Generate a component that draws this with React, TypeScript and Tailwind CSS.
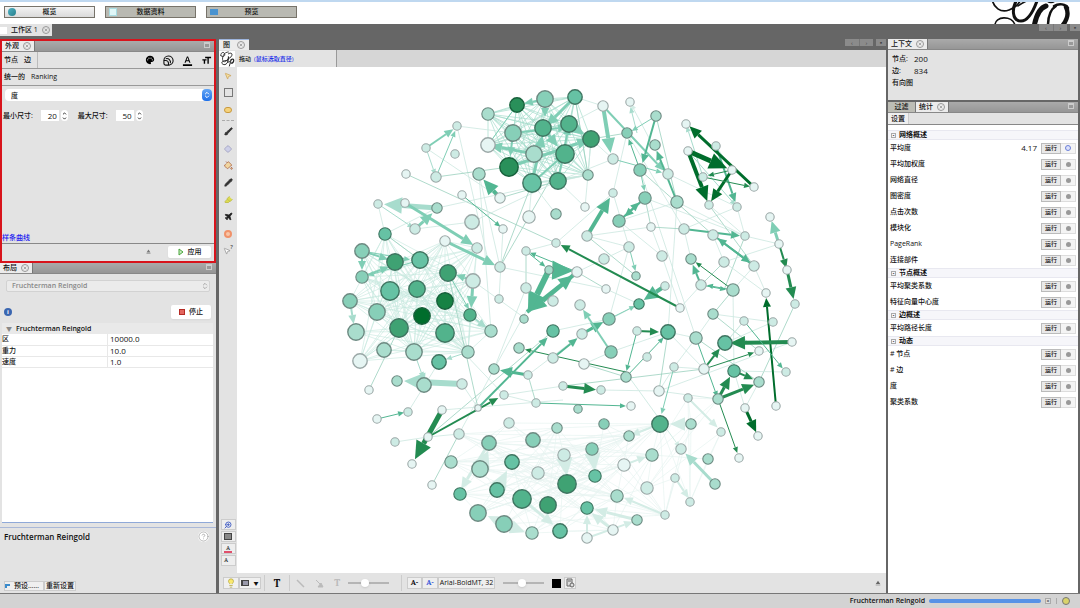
import type { ReactNode } from "react";
import { ChevronDown, ChevronUp, ChevronsUpDown, CircleHelp, Lightbulb, Pencil, Plane, Brush, Diamond, PaintBucket, MousePointer2, Highlighter, ZoomIn } from "lucide-react";
import { MdPalette, MdFormatColorText, MdFormatSize, MdEject } from "react-icons/md";

const shades = ["#e6f5f3", "#cdebe4", "#a9ddcd", "#87cfb8", "#66c2a4", "#52b38c", "#3fa273", "#29905a", "#178244", "#006d2c"];

// x, y, radius, shade
const nodes = [
  [517, 105, 7, 7], [545, 99, 8, 3], [575, 97, 7, 4], [488, 114, 6, 2], [513, 133, 8, 3], [543, 128, 8, 5], [569, 124, 8, 5],
  [488, 145, 7, 0], [534, 154, 8, 2], [565, 154, 9, 5], [509, 167, 9, 7], [532, 183, 9, 4], [558, 181, 8, 5], [591, 139, 8, 6],
  [457, 126, 4, 1], [426, 148, 4, 1], [455, 154, 4, 1], [436, 177, 5, 1], [479, 174, 6, 2], [406, 174, 4, 0], [462, 195, 4, 0],
  [500, 198, 5, 0], [529, 217, 6, 0], [556, 214, 5, 2], [378, 204, 4, 1], [405, 203, 4, 0], [437, 208, 5, 2], [415, 229, 5, 1],
  [472, 222, 7, 1], [503, 229, 4, 0], [445, 241, 5, 0], [477, 248, 5, 1], [385, 234, 6, 4], [362, 251, 7, 3], [395, 262, 8, 6],
  [420, 260, 8, 4], [362, 277, 6, 3], [448, 273, 8, 6], [473, 281, 7, 1], [500, 267, 5, 1], [499, 299, 4, 1], [526, 251, 4, 1],
  [556, 243, 4, 1], [549, 270, 4, 2], [526, 288, 5, 1], [553, 301, 5, 1], [390, 291, 9, 4], [417, 289, 8, 5], [445, 301, 8, 8],
  [350, 301, 7, 3], [377, 312, 8, 3], [422, 316, 8, 9], [470, 315, 6, 5], [356, 332, 8, 2], [399, 328, 9, 6], [445, 333, 9, 5],
  [491, 331, 6, 2], [384, 350, 7, 2], [414, 352, 8, 2], [360, 361, 7, 0], [468, 352, 6, 2], [439, 362, 7, 4], [397, 381, 5, 2],
  [424, 385, 7, 2], [462, 384, 5, 1], [369, 390, 4, 0], [377, 419, 4, 0], [408, 412, 4, 1], [442, 410, 4, 0], [478, 408, 3, 0],
  [428, 437, 4, 0], [459, 434, 5, 1], [395, 442, 4, 1], [412, 464, 4, 0], [432, 485, 4, 0], [451, 462, 6, 2], [460, 494, 6, 4],
  [480, 469, 8, 2], [489, 443, 7, 3], [512, 462, 7, 4], [497, 490, 7, 4], [478, 513, 8, 3], [504, 524, 8, 3], [532, 533, 6, 2],
  [560, 531, 7, 4], [522, 499, 9, 5], [548, 505, 8, 6], [567, 484, 9, 6], [538, 473, 6, 1], [564, 455, 6, 1], [533, 440, 7, 3],
  [557, 428, 5, 2], [509, 423, 5, 1], [536, 403, 4, 1], [504, 395, 4, 1], [494, 369, 5, 2], [528, 375, 4, 1], [553, 358, 5, 1],
  [519, 348, 5, 2], [553, 331, 6, 4], [524, 319, 4, 2], [563, 386, 4, 1], [578, 409, 4, 2], [603, 106, 5, 0], [630, 102, 4, 0],
  [656, 116, 5, 2], [627, 133, 5, 3], [655, 145, 5, 2], [613, 159, 5, 1], [640, 170, 6, 3], [668, 174, 5, 1], [588, 175, 5, 2],
  [613, 193, 4, 1], [645, 198, 6, 3], [677, 202, 6, 2], [619, 221, 6, 3], [651, 227, 4, 0], [585, 207, 4, 0], [587, 236, 5, 1],
  [629, 247, 5, 1], [662, 256, 5, 1], [604, 259, 5, 1], [636, 276, 4, 2], [577, 272, 5, 0], [606, 289, 4, 0], [665, 286, 4, 1],
  [639, 304, 5, 4], [580, 305, 5, 1], [680, 308, 4, 0], [609, 319, 6, 3], [686, 124, 4, 0], [688, 151, 4, 0], [716, 146, 4, 1],
  [732, 170, 4, 0], [703, 177, 4, 1], [754, 187, 4, 0], [709, 205, 4, 1], [737, 207, 4, 1], [684, 229, 5, 1], [713, 235, 5, 1],
  [745, 236, 4, 1], [770, 217, 4, 0], [779, 244, 4, 0], [787, 270, 4, 0], [795, 304, 4, 1], [691, 259, 5, 2], [724, 262, 5, 1],
  [754, 266, 5, 1], [701, 285, 5, 1], [733, 290, 6, 2], [766, 293, 4, 0], [713, 314, 5, 2], [582, 334, 5, 1], [611, 352, 6, 3],
  [637, 331, 4, 1], [668, 332, 7, 4], [647, 357, 4, 1], [584, 364, 5, 0], [626, 377, 5, 2], [696, 338, 6, 2], [725, 343, 7, 4],
  [744, 321, 4, 1], [773, 322, 4, 1], [792, 342, 4, 0], [759, 351, 4, 0], [674, 367, 4, 1], [704, 369, 5, 0], [734, 371, 6, 4],
  [759, 382, 5, 2], [786, 372, 4, 1], [659, 391, 5, 0], [601, 390, 4, 1], [631, 406, 4, 0], [718, 399, 5, 2], [688, 398, 4, 1],
  [745, 408, 4, 0], [776, 406, 4, 0], [758, 436, 4, 0], [739, 458, 4, 0], [660, 424, 8, 5], [691, 424, 5, 2], [604, 424, 5, 3],
  [629, 436, 5, 2], [721, 432, 4, 1], [681, 449, 5, 1], [708, 459, 5, 2], [652, 455, 6, 2], [624, 465, 6, 0], [592, 449, 6, 3],
  [595, 476, 6, 4], [675, 478, 4, 1], [647, 488, 6, 1], [715, 484, 5, 2], [690, 502, 4, 1], [617, 496, 6, 2], [587, 508, 6, 4],
  [665, 515, 4, 1], [637, 520, 5, 2], [613, 530, 5, 0], [587, 538, 5, 0],
];

const DARK = "#006d2c";
const GREEN = "#238b51";
const MID = "#52b692";
const SOFT = "#7fceb5";
const PALE = "#a7dccd";
const MIST = "#d3ece5";

// x1, y1, x2, y2, width, colour; the arrow head is at the second point
const arrows: [number, number, number, number, number, string][] = [
  [660, 424, 629, 436, 2, MIST], [691, 424, 668, 424, 4, MIST], [564, 455, 567, 478, 5, MIST], [592, 449, 595, 473, 5, MIST],
  [489, 443, 460, 491, 3, MIST], [480, 469, 489, 449, 6, MIST], [497, 490, 508, 469, 5, MIST], [504, 524, 486, 515, 4, MIST],
  [504, 524, 527, 533, 4, MIST], [522, 499, 555, 526, 3, MIST], [688, 398, 719, 429, 2, MIST], [715, 484, 684, 452, 3, PALE],
  [665, 515, 622, 497, 2, MIST], [637, 520, 593, 509, 3, MIST], [613, 530, 590, 512, 3, MIST], [587, 538, 635, 521, 2, MIST],
  [587, 538, 587, 513, 2, MIST], [675, 478, 690, 500, 2, MIST], [624, 465, 648, 456, 2, MIST], [624, 370, 681, 449, 1, MIST],
  [462, 384, 402, 381, 6, PALE], [437, 208, 382, 204, 5, PALE], [405, 203, 475, 246, 3, SOFT], [445, 241, 497, 266, 3, SOFT],
  [378, 204, 415, 229, 1, PALE], [415, 229, 434, 212, 3, SOFT], [500, 198, 482, 178, 4, MID], [462, 195, 502, 228, 1, MID],
  [426, 148, 455, 128, 2, SOFT], [436, 177, 456, 129, 1, SOFT], [426, 148, 436, 177, 1, PALE], [377, 419, 406, 412, 1, MID],
  [473, 281, 471, 310, 3, SOFT], [473, 281, 454, 274, 2, SOFT], [448, 273, 470, 311, 1, SOFT], [362, 251, 362, 272, 2, SOFT],
  [362, 277, 391, 266, 2, SOFT], [362, 251, 390, 260, 2, SOFT], [420, 260, 366, 276, 1, SOFT], [350, 301, 354, 326, 2, PALE],
  [470, 315, 488, 329, 2, PALE], [362, 251, 412, 260, 1, SOFT], [468, 352, 444, 360, 1, PALE], [414, 352, 424, 380, 1, PALE],
  [545, 99, 522, 104, 2, SOFT], [575, 97, 545, 127, 3, SOFT], [534, 154, 488, 145, 3, SOFT], [532, 183, 543, 133, 3, SOFT],
  [509, 167, 591, 139, 3, SOFT], [532, 183, 565, 154, 2, SOFT], [558, 181, 569, 124, 2, SOFT], [513, 133, 510, 158, 2, SOFT],
  [543, 128, 559, 148, 3, SOFT], [545, 99, 545, 119, 2, SOFT], [513, 133, 569, 127, 2, SOFT], [569, 124, 586, 136, 3, SOFT],
  [488, 145, 517, 105, 1, SOFT], [603, 106, 611, 155, 4, SOFT], [603, 106, 665, 172, 2, SOFT], [668, 174, 630, 102, 1, MIST],
  [637, 133, 630, 105, 1, PALE], [656, 116, 630, 132, 1, SOFT], [656, 116, 642, 165, 2, MID], [640, 170, 628, 137, 1, MID],
  [677, 202, 656, 149, 2, MID], [613, 159, 664, 173, 1, SOFT], [640, 170, 645, 193, 1, SOFT], [645, 198, 623, 218, 2, MID],
  [619, 221, 641, 201, 2, MID], [587, 236, 611, 196, 4, MID], [629, 247, 636, 273, 1, SOFT], [665, 286, 642, 301, 4, MID],
  [688, 151, 737, 207, 1, PALE], [716, 146, 736, 204, 2, MID], [703, 177, 686, 124, 1, PALE], [754, 187, 688, 125, 3, DARK],
  [688, 151, 729, 169, 5, DARK], [688, 151, 708, 203, 4, DARK], [732, 170, 710, 203, 3, DARK], [703, 177, 752, 187, 1, GREEN],
  [732, 170, 706, 176, 1, GREEN], [684, 229, 742, 236, 2, MID], [713, 235, 752, 264, 2, MID], [754, 266, 716, 237, 2, MID],
  [779, 244, 771, 219, 3, SOFT], [779, 244, 787, 270, 2, GREEN], [787, 270, 794, 301, 3, GREEN], [701, 285, 692, 263, 2, MID],
  [733, 290, 694, 261, 1, GREEN], [733, 290, 705, 285, 1, MID], [701, 285, 728, 290, 1, MID], [776, 406, 766, 296, 2, DARK],
  [792, 342, 728, 343, 4, GREEN], [744, 321, 784, 370, 1, MID], [704, 369, 721, 347, 2, GREEN], [704, 369, 756, 352, 1, GREEN],
  [718, 399, 731, 375, 3, GREEN], [718, 399, 756, 384, 3, GREEN], [734, 371, 755, 380, 2, GREEN], [696, 338, 718, 399, 1, MID],
  [718, 399, 738, 455, 1, GREEN], [745, 408, 757, 434, 3, DARK], [637, 331, 661, 332, 2, GREEN], [626, 377, 665, 336, 1, MID],
  [637, 331, 626, 373, 1, MID], [674, 367, 661, 416, 1, SOFT], [563, 386, 598, 390, 3, GREEN], [536, 403, 628, 406, 1, MID],
  [680, 308, 559, 244, 2, GREEN], [626, 372, 523, 349, 1, GREEN], [528, 375, 498, 370, 3, MID], [553, 358, 579, 337, 2, MID],
  [582, 334, 605, 321, 3, MID], [609, 319, 637, 305, 1, SOFT], [611, 352, 582, 308, 2, SOFT], [549, 270, 575, 271, 6, MID],
  [549, 270, 527, 315, 6, MID], [527, 312, 575, 274, 4, MID], [577, 272, 530, 312, 4, MID], [526, 251, 547, 268, 1, MID],
  [577, 272, 528, 252, 1, MID], [478, 408, 549, 336, 2, MID], [428, 437, 500, 397, 2, GREEN], [442, 410, 414, 461, 5, GREEN],
];

// long thin links between the communities
const links: [number, number, number, number][] = [
  [406, 174, 556, 243], [457, 126, 488, 260], [457, 126, 513, 133], [426, 148, 500, 198], [436, 177, 509, 167], [479, 174, 500, 267],
  [479, 174, 491, 331], [529, 217, 532, 183], [500, 267, 565, 154], [472, 222, 558, 181], [437, 208, 588, 175], [526, 251, 556, 243],
  [526, 251, 526, 288], [556, 243, 613, 193], [494, 369, 549, 270], [494, 369, 526, 288], [428, 437, 553, 331], [395, 442, 428, 437],
  [428, 437, 459, 434], [459, 434, 494, 369], [432, 485, 459, 434], [442, 410, 563, 400], [504, 395, 563, 386], [504, 395, 536, 403],
  [369, 390, 399, 328], [408, 412, 439, 362], [462, 384, 478, 408], [445, 333, 504, 395], [448, 273, 478, 408], [473, 281, 526, 319],
  [500, 267, 606, 289], [601, 390, 659, 391], [563, 386, 704, 369], [659, 391, 792, 342], [659, 391, 718, 399], [659, 391, 674, 367],
  [668, 332, 659, 391], [668, 332, 704, 369], [668, 332, 696, 338], [611, 352, 668, 332], [536, 403, 528, 375], [528, 375, 582, 334],
  [553, 331, 609, 319], [582, 334, 639, 304], [584, 364, 626, 377], [584, 364, 611, 352], [680, 308, 662, 256], [680, 308, 701, 285],
  [651, 227, 645, 198], [651, 227, 587, 236], [651, 227, 662, 256], [587, 236, 629, 247], [587, 236, 636, 276], [619, 221, 662, 256],
  [619, 221, 677, 202], [645, 198, 745, 236], [640, 170, 713, 235], [627, 133, 684, 229], [640, 170, 696, 338], [677, 202, 668, 332],
  [656, 116, 677, 202], [613, 193, 627, 133], [613, 193, 629, 247], [629, 247, 609, 319], [577, 272, 606, 289], [606, 289, 639, 304],
  [604, 259, 577, 272], [604, 259, 629, 247], [684, 229, 651, 227], [684, 229, 691, 259], [684, 229, 737, 207], [737, 207, 745, 236],
  [745, 236, 724, 290], [745, 236, 779, 244], [713, 235, 724, 262], [724, 262, 779, 244], [724, 262, 701, 285], [724, 262, 766, 293],
  [754, 266, 733, 290], [754, 266, 766, 293], [733, 290, 713, 314], [733, 290, 734, 371], [713, 314, 773, 322], [713, 314, 696, 338],
  [713, 314, 759, 351], [744, 321, 704, 369], [725, 343, 744, 321], [773, 322, 725, 343], [795, 304, 759, 382], [759, 382, 745, 408],
  [734, 371, 786, 372], [734, 371, 745, 408], [696, 338, 759, 382], [674, 367, 696, 338], [674, 367, 704, 369], [709, 205, 745, 236],
  [709, 205, 754, 266], [732, 170, 716, 146], [668, 174, 737, 207], [677, 202, 745, 236], [591, 139, 627, 133], [591, 139, 588, 175],
  [591, 139, 613, 159], [575, 97, 603, 106], [575, 97, 588, 175], [603, 106, 569, 124], [558, 181, 585, 207], [532, 183, 588, 175],
  [532, 183, 500, 267], [558, 181, 613, 159], [556, 214, 532, 183], [588, 175, 585, 207], [500, 198, 558, 181], [503, 229, 499, 299],
  [378, 204, 385, 234], [385, 234, 437, 208], [385, 234, 420, 260], [415, 229, 472, 222], [445, 241, 420, 260], [477, 248, 448, 273],
];

function inside(n: number[], box: number[]) {
  return n[0] >= box[0] && n[0] <= box[2] && n[1] >= box[1] && n[1] <= box[3];
}

// links between members of one community, keep about one pair out of every `keep`
function community(box: number[], keep: number) {
  const members = nodes.filter((n) => inside(n, box));
  let d = "";
  members.forEach((a, i) =>
    members.slice(i + 1).forEach((b, j) => {
      if ((i * i * 7 + j * 13 + a[0] * b[1]) % keep === 0) d += `M${a[0]} ${a[1]}L${b[0]} ${b[1]}`;
    })
  );
  return d;
}

function Arrow({ edge }: { edge: [number, number, number, number, number, string] }) {
  const [x1, y1, x2, y2, w, color] = edge;
  const len = Math.hypot(x2 - x1, y2 - y1);
  const ux = (x2 - x1) / len;
  const uy = (y2 - y1) / len;
  const head = Math.min(3 + w * 3, len * 0.8);
  const half = 1.2 + w * 1.4;
  const bx = x2 - ux * head - ux * 2;
  const by = y2 - uy * head - uy * 2;
  return (
    <g fill={color} stroke="none">
      <line x1={x1} y1={y1} x2={bx} y2={by} stroke={color} strokeWidth={w} />
      <polygon points={`${x2 - ux * 2},${y2 - uy * 2} ${bx - uy * half},${by + ux * half} ${bx + uy * half},${by - ux * half}`} />
    </g>
  );
}

function Graph() {
  return (
    <svg viewBox="237 67 649 506" className="h-full w-full" role="img" aria-label="图">
      <g fill="none">
        <path d={community([445, 420, 665, 540], 4)} stroke="#e6f4f1" strokeWidth=".7" />
        <path d={community([640, 395, 725, 520], 4)} stroke="#e6f4f1" strokeWidth=".7" />
        <path d={community([345, 230, 495, 365], 2)} stroke="#c5e8de" strokeWidth=".6" />
        <path d={community([480, 90, 595, 190], 1)} stroke="#a5dccb" strokeWidth=".7" />
        {links.map(([x1, y1, x2, y2], i) => (
          <line key={i} x1={x1} y1={y1} x2={x2} y2={y2} stroke={i % 4 === 0 ? "#9bd0be" : "#cce7df"} strokeWidth=".8" />
        ))}
      </g>
      {arrows.map((edge, i) => (
        <Arrow key={i} edge={edge} />
      ))}
      {nodes.map(([x, y, r, shade]) => (
        <circle
          key={`${x}-${y}`}
          cx={x}
          cy={y}
          r={r + 0.2}
          fill={shades[shade]}
          stroke={shade > 6 ? "#17603b" : shade > 3 ? "#3f7561" : shade > 1 ? "#6d8a82" : "#9ba8a7"}
          strokeWidth={r > 6 ? 1.4 : 1.1}
        />
      ))}
    </svg>
  );
}

function Close() {
  return (
    <button aria-label="关闭" className="flex size-2 items-center justify-center rounded-full border border-[#999] text-[#888]">
      <svg viewBox="0 0 6 6" className="size-1" stroke="currentColor"><path d="M1 1l4 4M5 1L1 5" /></svg>
    </button>
  );
}

function TabStrip({ title, before }: { title: string; before?: string }) {
  return (
    <div className="flex h-[11px] shrink-0 items-stretch border-b border-[#888] bg-linear-to-b from-[#aaa] to-[#969696]">
      {before && <button className="w-7 border-r border-[#777] bg-[#bdbdb5]">{before}</button>}
      <div className="flex items-center gap-1 border-r border-[#777] bg-[#ececec] px-[3px]">
        <span>{title}</span>
        <Close />
      </div>
      <button aria-label="最小化" className="mt-px mr-1 ml-auto size-[6px] border border-[#ccc] border-t-2 bg-[#999]" />
    </div>
  );
}

function PagerButtons() {
  return (
    <div className="flex text-[6px] leading-none text-[#444]">
      <button aria-label="向左" className="h-[7px] w-[14px] bg-[#8b8b8b]">‹</button>
      <button aria-label="向右" className="mr-[3px] h-[7px] w-[14px] border-l border-[#777] bg-[#8b8b8b]">›</button>
      <button aria-label="列表" className="h-[7px] w-[10px] bg-[#8b8b8b]">▪</button>
    </div>
  );
}

function BigLogo() {
  return (
    <svg viewBox="0 2 80 22" className="h-[22px] w-20 overflow-hidden" fill="none" stroke="#111" strokeLinecap="round">
      <path d="M1-2C2 8 10 13 18 10 26 7 28 3 31-2" strokeWidth="1.8" />
      <path d="M27-2C20 8 21 21 30 21 37 21 42 12 46 1" strokeWidth="3" />
      <path d="M4 25C4 16 21 15 24 25M27 6C32 2 38 0 42-2" strokeWidth="1.6" />
      <path d="M43 27C45 16 48 8 55 6" strokeWidth="5" />
      <path d="M57 26C57 16 60 9 65 6M63 6C68 3 75 4 77 8" strokeWidth="2.5" />
      <path d="M75 7C78 13 76 20 72 25" strokeWidth="4.5" />
      <path d="M54-2C57 4 63 4 66-2M69-2C73 1 75 0 76-2" strokeWidth="1.6" />
    </svg>
  );
}

function SmallLogo() {
  return (
    <svg viewBox="0 0 17 17" className="size-4" fill="none" stroke="#222" strokeLinecap="round">
      <path d="M2 5C1 2 5 0 6 3 7 6 3 7 2 5M10 1C5 1 3 7 4 10 5 13 9 11 10 7" strokeWidth=".9" />
      <path d="M10 6C11 12 7 16 4 14 1 12 5 10 8 10M10 3C13 1 15 3 13 6 11 8 9 8 9 10 9 13 12 12 13 9L11 16" strokeWidth="1" />
      <path d="M13 9C17 7 16 13 13 13" strokeWidth="1.3" />
    </svg>
  );
}

function TopButton({ label, active, children }: { label: string; active?: boolean; children: ReactNode }) {
  return (
    <button className={`flex h-3 w-[91px] items-center border border-[#77736a] px-[3px] ${active ? "bg-linear-to-b from-[#f4f4f4] to-[#dadada]" : "bg-[#b9b9b2]"}`}>
      {children}
      <span className="flex-1 pr-2 text-center">{label}</span>
    </button>
  );
}

function NumberBox({ id, label, value }: { id: string; label: string; value: string }) {
  return (
    <div className="flex items-center">
      <label htmlFor={id}>{label}:</label>
      <input id={id} defaultValue={value} className="ml-2 h-[11px] w-[18px] bg-white pr-[2px] text-right text-[8px]" />
      <span className="ml-[2px] flex h-[11px] w-[7px] flex-col items-center justify-center rounded-sm bg-white">
        <ChevronUp className="size-[5px]" strokeWidth={4} />
        <ChevronDown className="size-[5px]" strokeWidth={4} />
      </span>
    </div>
  );
}

function AppearancePanel() {
  return (
    <section className="flex h-[224px] flex-col border-2 border-[#d8141c]">
      <TabStrip title="外观" />
      <div className="flex h-[17px] shrink-0 items-center border-b border-[#999] pl-[2px]">
        <button>节点</button>
        <button className="ml-[6px]">边</button>
        <div className="ml-[6px] h-4 border-l border-[#bbb]" />
        <div className="mr-[2px] ml-auto flex items-center gap-2 text-black">
          <button aria-label="颜色"><MdPalette className="size-[10px]" /></button>
          <button aria-label="大小">
            <svg viewBox="0 0 12 12" className="size-[11px]" fill="none" stroke="#111" strokeWidth="1.2">
              <path d="M1 6A5 5 0 1 1 7 11H3A2 2 0 0 1 1 9Z" /><path d="M1 6H3A3 3 0 0 1 6 9V11M3 4A4 4 0 0 1 8 9" />
            </svg>
          </button>
          <button aria-label="标签颜色"><MdFormatColorText className="size-[11px]" /></button>
          <button aria-label="标签大小"><MdFormatSize className="size-[11px]" /></button>
        </div>
      </div>
      <div className="flex h-[17px] shrink-0 items-center gap-[6px] border-b border-[#999] pl-[2px]">
        <button>统一的</button>
        <button>Ranking</button>
      </div>
      <div className="relative mt-[3px] mr-[2px] ml-[3px] shrink-0">
        <select aria-label="排序依据" className="block h-3 w-full appearance-none rounded-sm bg-white pl-[6px] leading-[11px]">
          <option>度</option>
        </select>
        <span className="pointer-events-none absolute top-0 right-0 flex h-3 w-[10px] items-center justify-center rounded-sm bg-linear-to-b from-[#62a5f5] to-[#1c6fe8] text-white">
          <ChevronsUpDown className="size-2" strokeWidth={3} />
        </span>
      </div>
      <div className="mt-[9px] flex items-center gap-[10px] pl-px">
        <NumberBox id="min" label="最小尺寸" value="20" />
        <NumberBox id="max" label="最大尺寸" value="50" />
      </div>
      <a href="#spline" className="mt-auto text-[#2222f0]">样条曲线</a>
      <div className="flex h-[18px] shrink-0 items-center justify-end border-t border-[#888] pr-[3px] pb-[2px]">
        <MdEject className="mr-4 size-[7px] text-[#777]" />
        <button className="flex h-3 w-[43px] items-center justify-center gap-1 rounded-xs bg-white shadow-xs">
          <svg viewBox="0 0 6 8" className="h-2 w-[6px]" fill="#c8edc0" stroke="#4aa53c"><path d="M1 1l4 3-4 3z" /></svg>
          应用
        </button>
      </div>
    </section>
  );
}

const properties = [["区", "10000.0"], ["重力", "10.0"], ["速度", "1.0"]];

function LayoutPanel() {
  return (
    <section className="flex min-h-0 flex-1 flex-col">
      <TabStrip title="布局" />
      <div className="relative mx-[6px] mt-[6px] shrink-0 text-[#888]">
        <select aria-label="布局算法" className="block h-3 w-full appearance-none rounded-xs border border-[#d2d2d2] bg-[#ebebeb] pl-[5px] font-semibold leading-[10px]">
          <option>Fruchterman Reingold</option>
        </select>
        <ChevronsUpDown className="pointer-events-none absolute top-[2px] right-px size-2" />
      </div>
      <div className="mt-3 flex h-[15px] shrink-0 items-center justify-between pr-[5px] pl-1">
        <span className="flex size-2 items-center justify-center rounded-full bg-[#3a66b0] text-[6px] font-bold text-white">i</span>
        <button className="flex h-[14px] w-10 items-center justify-center gap-1 rounded-xs bg-white shadow-xs">
          <span className="size-[6px] border border-[#b52b25] bg-[#e2675f]" />
          停止
        </button>
      </div>
      <div className="mt-1 mr-[3px] ml-[2px] min-h-0 flex-1 border-b border-[#8fa9d8] bg-white">
        <table className="w-full table-fixed border-collapse text-[8px]">
          <thead>
            <tr className="h-[11px] bg-[#e9e9e9] text-left text-[7px] leading-[10px]">
              <th colSpan={2} className="p-0 pl-1 font-semibold"><span className="mr-1 text-[6px] text-[#888]">▼</span>Fruchterman Reingold</th>
            </tr>
          </thead>
          <tbody>
            {properties.map(([name, value]) => (
              <tr key={name} className="h-[11px] border-b border-[#e8e8e8] leading-[10px]">
                <td className="border-r border-[#e8e8e8] p-0 text-[7px]">{name}</td>
                <td className="p-0 pl-[2px]">{value}</td>
              </tr>
            ))}
          </tbody>
        </table>
      </div>
      <div className="mt-1 flex h-[66px] shrink-0 flex-col border-t border-[#a9b8d8] pr-[7px] pl-1">
        <div className="mt-[3px] flex items-center justify-between text-[8px] font-semibold">
          Fruchterman Reingold
          <CircleHelp className="size-[11px] rounded-full bg-white text-[#999]" strokeWidth={1.5} />
        </div>
        <div className="mt-auto mb-[2px] flex h-[10px]">
          <button className="flex w-10 items-center gap-1 border border-[#ccc] bg-[#efefef]"><span className="h-1 w-[5px] border-t-2 border-l-2 border-[#3c8ccc]" />预设……</button>
          <button className="flex items-center border border-[#ccc] bg-[#efefef] px-px">重新设置</button>
        </div>
      </div>
    </section>
  );
}

function ToolIcon({ label, children }: { label: string; children: ReactNode }) {
  return <button aria-label={label} className="flex h-[17px] w-full items-center justify-center">{children}</button>;
}

function GraphTools() {
  return (
    <div className="flex w-[18px] shrink-0 flex-col items-center bg-[#e3e3e3]">
      <ToolIcon label="选择"><MousePointer2 className="size-2 fill-[#f6df9e] text-[#c59b52]" /></ToolIcon>
      <ToolIcon label="矩形"><span className="size-[9px] border border-[#777]" /></ToolIcon>
      <ToolIcon label="拖动"><span className="h-[6px] w-2 rounded-sm border border-[#c99a3f] bg-[#f5d27b]" /></ToolIcon>
      <div className="my-[2px] w-3 border-t border-dashed border-[#aaa]" />
      <ToolIcon label="画笔"><Brush className="size-[9px] fill-[#333] text-[#333]" /></ToolIcon>
      <ToolIcon label="尺寸"><Diamond className="size-2 fill-[#cdcfe8] text-[#9293b8]" /></ToolIcon>
      <ToolIcon label="填充"><PaintBucket className="size-[9px] fill-[#f0d5a0] text-[#a75e3d]" /></ToolIcon>
      <ToolIcon label="节点铅笔"><Pencil className="size-[9px] fill-[#333] text-[#333]" /></ToolIcon>
      <ToolIcon label="边铅笔"><Highlighter className="size-[9px] fill-[#dcdc50] text-[#b9b53a]" /></ToolIcon>
      <ToolIcon label="最短路径"><Plane className="size-[9px] fill-[#222] text-[#222]" /></ToolIcon>
      <ToolIcon label="热图"><span className="size-2 rounded-full border-2 border-[#f0926a] bg-[#f8c6a8]" /></ToolIcon>
      <ToolIcon label="编辑"><MousePointer2 className="size-2 fill-white text-[#888]" /><span className="-ml-px self-start text-[6px]">?</span></ToolIcon>
      <div className="mt-auto mb-[7px] flex flex-col gap-px">
        <button aria-label="居中" className="flex h-[11px] w-[15px] items-center justify-center border border-[#ccc] bg-[#eee]"><ZoomIn className="size-2 -scale-x-100 text-[#4d67c8]" strokeWidth={3} /></button>
        <button aria-label="重置颜色" className="flex h-[11px] w-[15px] items-center justify-center border border-[#ccc] bg-[#eee]"><span className="h-[7px] w-2 border border-[#444] bg-[#888]" /></button>
        <button aria-label="标签颜色" className="flex h-[11px] w-[15px] items-center justify-center border border-[#ccc] bg-[#eee] font-serif"><span className="h-[9px] w-2 border-b-2 border-[#e0506c] text-center leading-[8px]">A</span></button>
        <button aria-label="标签显示" className="h-[11px] w-[15px] border border-[#ccc] bg-[#eee] pr-1 text-center font-serif leading-[9px]">A</button>
      </div>
    </div>
  );
}

function Slider({ label, value }: { label: string; value: number }) {
  return (
    <input
      type="range"
      aria-label={label}
      defaultValue={value}
      className="h-2 w-[41px] appearance-none bg-transparent [&::-webkit-slider-runnable-track]:h-[2px] [&::-webkit-slider-runnable-track]:bg-[#b5b5b5] [&::-webkit-slider-thumb]:-mt-[3px] [&::-webkit-slider-thumb]:size-2 [&::-webkit-slider-thumb]:appearance-none [&::-webkit-slider-thumb]:rounded-full [&::-webkit-slider-thumb]:bg-white [&::-webkit-slider-thumb]:shadow-sm"
    />
  );
}

function GraphToolbar() {
  return (
    <div className="flex h-5 shrink-0 items-center bg-[#e3e3e3] pr-1 pl-1">
      <button aria-label="背景颜色" className="flex h-3 w-4 items-center justify-center border border-[#ccc] bg-[#f0f0f0]"><Lightbulb className="size-[10px] fill-[#fae96c] text-[#b9ac4c]" /></button>
      <button aria-label="截图" className="flex h-3 w-[22px] items-center justify-center gap-1 border border-[#ccc] bg-[#f0f0f0] text-[5px]"><span className="h-[6px] w-2 border border-[#444] border-l-2 bg-[#99a]" />▼</button>
      <div className="ml-[3px] h-4 border-l border-[#ccc]" />
      <button aria-label="节点标签" className="w-6 text-center font-serif text-[11px] leading-none font-bold">T</button>
      <div className="h-4 border-l border-[#ccc]" />
      <div className="ml-[6px] flex w-11 items-center justify-between text-[#bbb]">
        <button aria-label="显示边"><svg viewBox="0 0 9 9" className="size-[9px]" stroke="currentColor"><path d="M1 1l7 7" strokeWidth="1.5" /></svg></button>
        <button aria-label="边颜色"><svg viewBox="0 0 9 9" className="size-[9px]" stroke="currentColor" fill="currentColor"><path d="M1 1l6 6M3 8l3-4 2 4z" /></svg></button>
        <button aria-label="边标签" className="font-serif text-[10px] leading-none font-bold">T</button>
      </div>
      <div className="ml-2 flex"><Slider label="边粗细" value={38} /></div>
      <div className="mr-[5px] ml-3 h-4 border-l border-[#ccc]" />
      <button className="h-3 w-[15px] border border-[#ccc] bg-[#eee] text-center font-serif text-[8px] leading-[10px] font-bold">A-</button>
      <button className="h-3 w-4 border border-[#ccc] bg-[#eee] text-center font-serif text-[8px] leading-[10px] font-bold text-[#3a57d8]">A-</button>
      <button className="h-3 w-[57px] border border-[#ccc] bg-[#eee] text-center leading-[10px] whitespace-nowrap">Arial-BoldMT, 32</button>
      <div className="ml-2 flex"><Slider label="字号" value={45} /></div>
      <button aria-label="标签颜色" className="ml-2 size-[9px] bg-black" />
      <button aria-label="属性" className="ml-[3px] flex size-3 items-center justify-center border border-[#ccc] bg-[#eee]">
        <svg viewBox="0 0 10 10" className="size-[10px]" fill="#ddd" stroke="#666"><path d="M2 1h5v7H2zM3 3h3" /><circle cx="7" cy="7" r="2" /></svg>
      </button>
      <button aria-label="展开" className="ml-auto"><MdEject className="size-2 text-[#666]" /></button>
    </div>
  );
}

function GraphPanel() {
  return (
    <main className="flex min-w-0 flex-1 flex-col">
      <div className="flex h-[13px] shrink-0 items-stretch justify-between bg-[#666] pt-[2px]">
        <div className="flex items-center gap-[7px] border-t border-[#9db4dc] bg-[#ececec] px-1"><span>图</span><Close /></div>
        <PagerButtons />
      </div>
      <div className="flex h-[17px] shrink-0 items-center bg-[#d6d6d6]">
        <div className="flex h-full w-[118px] items-center border-r border-[#999] bg-[#e3e3e3]">
          <span className="bg-white"><SmallLogo /></span>
          <span className="ml-1 whitespace-nowrap text-[6px]">拖动</span>
          <span className="ml-[3px] whitespace-nowrap text-[6px] text-[#1c30e8]">(鼠标选取直径)</span>
        </div>
      </div>
      <div className="flex min-h-0 flex-1">
        <GraphTools />
        <div className="flex min-w-0 flex-1 flex-col bg-white">
          <div className="min-h-0 flex-1"><Graph /></div>
        </div>
      </div>
      <GraphToolbar />
    </main>
  );
}

const statistics = [
  { title: "网络概述", rows: ["平均度", "平均加权度", "网络直径", "图密度", "点击次数", "模块化", "PageRank", "连接部件"] },
  { title: "节点概述", rows: ["平均聚类系数", "特征向量中心度"] },
  { title: "边概述", rows: ["平均路径长度"] },
  { title: "动态", rows: ["# 节点", "# 边", "度", "聚类系数"] },
];

function StatRow({ name }: { name: string }) {
  const done = name === "平均度";
  return (
    <li className="flex h-4 items-center pr-[2px] pl-[2px]">
      <span>{name}</span>
      <span className="mr-1 ml-auto text-[8px]">{done && "4.17"}</span>
      <button className="h-[11px] w-5 border border-[#bbb] bg-[#e9e9e9] text-center text-[6px] leading-[9px]">运行</button>
      <button aria-label={`${name}报告`} className="flex h-[11px] w-[15px] items-center justify-center border border-l-0 border-[#ddd] bg-[#f4f4f4]">
        <span className={done ? "size-[6px] rounded-full border border-[#6c80d8] bg-[#dce2fa]" : "size-[5px] rounded-full bg-[#999]"} />
      </button>
    </li>
  );
}

function RightPanels() {
  return (
    <aside className="flex w-[194px] shrink-0 flex-col border-x-2 border-[#666]">
      <section className="h-[63px] shrink-0 border-t-2 border-[#666] bg-[#e3e3e3]">
        <TabStrip title="上下文" />
        <dl className="grid grid-cols-[22px_1fr] pt-[3px] pl-1 leading-[12px]">
          <dt>节点:</dt>
          <dd className="text-[8px]">200</dd>
          <dt>边:</dt>
          <dd className="text-[8px]">834</dd>
          <dt className="col-span-2">有向图</dt>
        </dl>
      </section>
      <section className="flex min-h-0 flex-1 flex-col border-t-2 border-[#666] bg-white">
        <TabStrip title="统计" before="过滤" />
        <div className="h-3 shrink-0 border-b border-[#888] bg-[#e3e3e3]">
          <button className="h-[11px] border-r border-[#ccc] bg-[#efefef] px-[3px]">设置</button>
        </div>
        <div className="pt-[5px]">
          {statistics.map((group) => (
            <div key={group.title}>
              <h2 className="flex h-[10px] items-center gap-[3px] border-y border-[#e8e8f0] bg-[#f6f6fa] pl-[3px] font-bold">
                <span className="flex size-[5px] items-center justify-center border border-[#aaa] text-[5px] leading-none">-</span>
                {group.title}
              </h2>
              <ul>
                {group.rows.map((name) => (
                  <StatRow key={name} name={name} />
                ))}
              </ul>
            </div>
          ))}
        </div>
      </section>
    </aside>
  );
}

export default function App() {
  return (
    <div className="flex h-screen flex-col overflow-hidden bg-[#e3e3e3] font-['Open_Sans','Noto_Sans_CJK_SC',sans-serif] text-[7px] leading-[10px] font-medium text-[#111]">
      <header className="flex h-6 shrink-0 justify-between border-t-2 border-[#bfd8f0] bg-white pr-[9px] pl-1">
        <nav className="flex items-center gap-[10px] pb-[2px]">
          <TopButton label="概览" active><span className="size-2 rounded-full bg-linear-to-br from-[#4fb2c4] to-[#27808c]" /></TopButton>
          <TopButton label="数据资料"><span className="size-2 border border-[#a8dce2] bg-[#e0f7f8]" /></TopButton>
          <TopButton label="预览"><span className="h-[6px] w-2 bg-[#4a93d0]" /></TopButton>
        </nav>
        <BigLogo />
      </header>
      <div className="flex h-[13px] shrink-0 justify-between bg-[#666]">
        <div className="flex h-3 items-center gap-1 bg-[#e3e3e3] pr-[2px]">
          <span className="size-[7px] bg-white" />
          <span>工作区 1</span>
          <Close />
        </div>
        <PagerButtons />
      </div>
      <div className="flex min-h-0 flex-1">
        <div className="flex w-[216px] shrink-0 flex-col border-t-2 border-[#666]">
          <AppearancePanel />
          <LayoutPanel />
        </div>
        <div className="w-[3px] shrink-0 bg-[#666]" />
        <GraphPanel />
        <RightPanels />
      </div>
      <footer className="flex h-[15px] shrink-0 items-center justify-end border-t border-[#777] bg-[#d3d3d3] pr-[10px]">
        <span className="font-semibold">Fruchterman Reingold</span>
        <div role="progressbar" aria-label="Fruchterman Reingold" className="ml-1 h-1 w-28 rounded-full bg-[#5792e6]" />
        <button aria-label="取消" className="ml-1 flex size-[6px] items-center justify-center border border-[#aaa] bg-[#e3e3e3] text-[6px] leading-none">×</button>
        <span className="mx-[5px] h-[6px] border-l border-[#aaa]" />
        <span className="size-2 rounded-full border border-[#777] bg-[#d9d36b]" />
      </footer>
    </div>
  );
}
